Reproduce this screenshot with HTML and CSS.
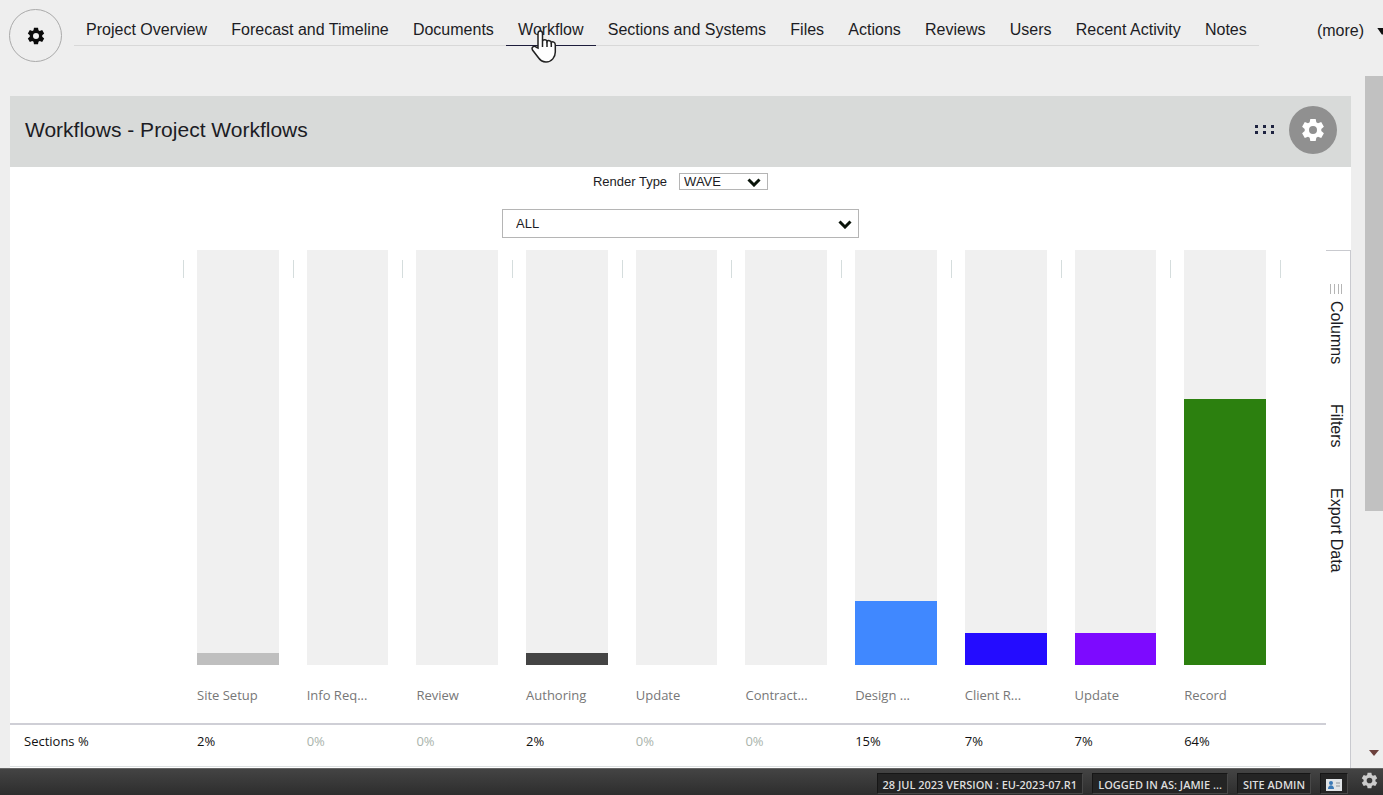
FILE: index.html
```html
<!DOCTYPE html>
<html lang="en">
<head>
  <meta charset="UTF-8">
  <meta name="viewport" content="width=device-width, initial-scale=1.0">
  <title>Workflows - Project Workflows</title>
  <link rel="stylesheet" href="styles.css">
</head>
<body>

  <svg class="sprite" aria-hidden="true">
    <symbol id="gear" viewBox="0 0 24 24">
      <path fill-rule="evenodd" d="M9.300 1h5.400l.6 3.300 1.700 1 3.200-1.200 2.700 4.700-2.600 2.200v2l2.600 2.200-2.700 4.700-3.200-1.200-1.700 1-.6 3.300H9.300l-.6-3.300-1.700-1-3.200 1.200-2.700-4.700 2.600-2.200v-2L1.100 8.800l2.700-4.700L7 5.300l1.700-1zM12 8a4 4 0 1 0 0 8 4 4 0 0 0 0-8z"/>
    </symbol>
    <symbol id="chevron" viewBox="0 0 14 9">
      <path d="M1.500 1.500 7 7l5.500-5.500" fill="none" stroke="#0a140a" stroke-width="3"/>
    </symbol>
  </svg>

  <header class="topbar">
    <button class="round-btn" aria-label="Settings"><svg><use href="#gear"/></svg></button>
    <nav class="tabs">
      <a href="#">Project Overview</a>
      <a href="#">Forecast and Timeline</a>
      <a href="#">Documents</a>
      <a href="#" class="active">Workflow
        <svg class="pointer" viewBox="0 0 27 35">
          <path d="M7 19V4.500C7 1 11.500 1 11.500 4.500V12c1-2 4.300-1.500 4.500.5 1-1.500 4-1 4.300 1 1.200-1.300 4-.5 4 2.500v7c0 5-3.500 10-9.300 10-4.500 0-6.500-2.500-8.500-5.500L1.500 21c-1.500-3 1.500-4.500 3.500-3z" fill="#fff" stroke="#222" stroke-width="1.500"/>
          <path d="M11.500 12v6M16 12.500V18M20.300 13.500V18" stroke="#222" stroke-width="1.500"/>
        </svg>
      </a>
      <a href="#">Sections and Systems</a>
      <a href="#">Files</a>
      <a href="#">Actions</a>
      <a href="#">Reviews</a>
      <a href="#">Users</a>
      <a href="#">Recent Activity</a>
      <a href="#">Notes</a>
    </nav>
    <button class="more">(more) <span class="caret"></span></button>
  </header>

  <main class="main">
    <section class="panel">
      <div class="panel-head">
        <h1>Workflows - Project Workflows</h1>
        <svg class="grip" viewBox="0 0 20 10">
          <path d="M0 0h3v3H0zM8 0h3v3H8zM16 0h3v3h-3zM0 6h3v3H0zM8 6h3v3H8zM16 6h3v3h-3z"/>
        </svg>
        <button class="round-btn solid" aria-label="Panel settings"><svg><use href="#gear"/></svg></button>
      </div>

      <div class="filters">
        <div class="render-type">
          <label for="render">Render Type</label>
          <span class="select small">
            <select id="render"><option>WAVE</option></select>
            <svg><use href="#chevron"/></svg>
          </span>
        </div>
        <span class="select wide">
          <select aria-label="Workflow"><option>ALL</option></select>
          <svg><use href="#chevron"/></svg>
        </span>
      </div>

      <div class="grid">
        <div class="grid-body">
          <table class="wave">
            <colgroup>
              <col class="col-name">
              <col span="10">
              <col class="col-end">
            </colgroup>
            <thead>
              <tr>
                <td></td>
                <th><div class="bar"><div class="fill silver" style="height: 2.8%"></div></div>Site Setup</th>
                <th><div class="bar"></div>Info Req...</th>
                <th><div class="bar"></div>Review</th>
                <th><div class="bar"><div class="fill dark" style="height: 2.8%"></div></div>Authoring</th>
                <th><div class="bar"></div>Update</th>
                <th><div class="bar"></div>Contract...</th>
                <th><div class="bar"><div class="fill blue" style="height: 15.4%"></div></div>Design ...</th>
                <th><div class="bar"><div class="fill indigo" style="height: 7.7%"></div></div>Client R...</th>
                <th><div class="bar"><div class="fill violet" style="height: 7.7%"></div></div>Update</th>
                <th><div class="bar"><div class="fill green" style="height: 64.1%"></div></div>Record</th>
                <td class="end"></td>
              </tr>
            </thead>
            <tbody>
              <tr>
                <th>Sections %</th>
                <td>2%</td>
                <td class="zero">0%</td>
                <td class="zero">0%</td>
                <td>2%</td>
                <td class="zero">0%</td>
                <td class="zero">0%</td>
                <td>15%</td>
                <td>7%</td>
                <td>7%</td>
                <td>64%</td>
                <td class="end"></td>
              </tr>
            </tbody>
          </table>
        </div>
        <div class="side-tabs">
          <button><svg class="cols" viewBox="0 0 12 10"><path d="M.5 0v10M4.500 0v10M8.500 0v10M11.500 0v10"/></svg>Columns</button>
          <button>Filters</button>
          <button>Export Data</button>
        </div>
      </div>
    </section>

    <div class="scroll">
      <div class="thumb"></div>
      <span class="down"></span>
    </div>
  </main>

  <footer class="status">
    <span class="cell">28 JUL 2023 VERSION : EU-2023-07.R1</span>
    <span class="cell">LOGGED IN AS: JAMIE ...</span>
    <span class="cell">SITE ADMIN</span>
    <button class="cell" aria-label="Contact card">
      <svg class="card" viewBox="0 0 16 12">
        <path d="M0 0h16v12H0z" fill="#dfe3e6"/>
        <circle cx="5" cy="4" r="2" fill="#3a78b5"/>
        <path d="M2 10c0-5 6-5 6 0z" fill="#3a78b5"/>
        <path d="M10 4h4M10 7h4" stroke="#8d949a"/>
      </svg>
    </button>
    <button class="status-gear" aria-label="Preferences"><svg><use href="#gear"/></svg></button>
  </footer>

</body>
</html>
```
FILE: styles.css
```css
* {
  box-sizing: border-box;
}

body {
  margin: 0;
  height: 100vh;
  display: flex;
  flex-direction: column;
  overflow: hidden;
  background: #eeeeee;
  font-family: "Liberation Sans", Arial, sans-serif;
  color: #1c1c24;
}

button {
  border: 0;
  padding: 0;
  background: none;
  color: inherit;
  font: inherit;
  cursor: pointer;
}

svg {
  display: block;
}

.sprite {
  position: absolute;
  width: 0;
  height: 0;
}

/* top navigation */
.topbar {
  display: flex;
  align-items: flex-start;
  height: 76px;
  padding: 9px 0 0 9px;
}

.round-btn {
  flex: none;
  display: flex;
  align-items: center;
  justify-content: center;
  width: 53px;
  height: 53px;
  border: 1px solid #aaa;
  border-radius: 50%;
}

.round-btn svg {
  width: 18px;
  height: 18px;
  fill: #0a0a0a;
}

.tabs {
  flex: 1;
  display: flex;
  margin: 0 58px 0 12px;
  border-bottom: 1px solid #d8d8d8;
}

.tabs a {
  flex: 1 1 auto;
  position: relative;
  height: 37px;
  margin-bottom: -1px;
  line-height: 42px;
  font-size: 16px;
  text-align: center;
  white-space: nowrap;
  text-decoration: none;
  color: inherit;
}

.tabs .active {
  border-bottom: 1px solid #1e1e3c;
}

.pointer {
  position: absolute;
  left: 25px;
  top: 20px;
  width: 27px;
  height: 35px;
}

.more {
  display: flex;
  align-items: center;
  gap: 13px;
  height: 44px;
  font-size: 16px;
  white-space: nowrap;
}

.caret {
  width: 6px;
  height: 7px;
  background: #111;
  clip-path: polygon(0 0, 100% 0, 100% 100%, 80% 100%);
}

/* content */
.main {
  flex: 1;
  min-height: 0;
  display: flex;
}

.panel {
  flex: 1;
  display: flex;
  flex-direction: column;
  margin: 20px 14px 0 10px;
  background: #fff;
}

.panel-head {
  display: flex;
  align-items: center;
  height: 71px;
  padding: 0 14px 3px 15px;
  background: #d8dad9;
}

.panel-head h1 {
  flex: 1;
  margin: 0;
  font-size: 21px;
  font-weight: normal;
}

.grip {
  width: 20px;
  height: 10px;
  margin-right: 14px;
  fill: #1e2340;
}

.round-btn.solid {
  width: 48px;
  height: 48px;
  border: 0;
  background: #909090;
}

.solid svg {
  width: 24px;
  height: 24px;
  fill: #fff;
}

.filters {
  display: flex;
  flex-direction: column;
  align-items: center;
  gap: 19px;
  padding: 6px 0 12px;
  font-size: 13px;
}

.render-type {
  display: flex;
  align-items: center;
  gap: 12px;
  height: 17px;
}

.select {
  position: relative;
}

.select select {
  display: block;
  width: 100%;
  height: 100%;
  padding: 0 4px;
  border: 1px solid #b5b5b5;
  border-radius: 0;
  background: #fff;
  color: inherit;
  font: inherit;
  appearance: none;
}

.select svg {
  position: absolute;
  top: 50%;
  right: 7px;
  width: 14px;
  height: 9px;
  margin-top: -4px;
  pointer-events: none;
}

.small {
  width: 89px;
  height: 17px;
}

.wide {
  width: 357px;
  height: 29px;
}

.wide select {
  padding: 0 13px;
}

.grid {
  flex: 1;
  display: flex;
}

.grid-body {
  flex: 1;
}

/* wave chart */
.wave {
  width: 100%;
  table-layout: fixed;
  border-collapse: collapse;
  font-family: "Open Sans", "Noto Sans", sans-serif;
  font-size: 13px;
  line-height: 18px;
  color: #111;
}

.col-name {
  width: 173px;
}

.col-end {
  width: 46px;
}

.wave th,
.wave td {
  padding: 0 14px;
  text-align: left;
  font-weight: normal;
}

.wave thead tr {
  border-bottom: 2px solid #cfcfd6;
}

.wave thead th {
  padding-bottom: 19px;
  color: #777;
}

/* short divider at the top of every column */
.wave thead th,
.wave thead .end {
  background: linear-gradient(#d5dddd, #d5dddd) 0 10px / 1px 18px no-repeat;
}

.wave tbody th,
.wave tbody td {
  height: 42px;
  padding-bottom: 9px;
  border-bottom: 1px solid #dde1e2;
}

.wave tbody .end {
  border-bottom: 0;
}

.wave .zero {
  color: #aab4ac;
}

.bar {
  display: flex;
  align-items: flex-end;
  height: 415px;
  margin-bottom: 21px;
  background: #f0f0f0;
}

.fill {
  width: 100%;
}

.silver {
  background: #bfbfbf;
}

.dark {
  background: #444;
}

.blue {
  background: #4088ff;
}

.indigo {
  background: #240cff;
}

.violet {
  background: #7d0aff;
}

.green {
  background: #2c800f;
}

.side-tabs {
  display: flex;
  flex-direction: column;
  align-items: center;
  gap: 40px;
  width: 25px;
  padding: 33px 4px 0 0;
  border-top: 1px solid #c9cacf;
  border-right: 1px solid #c9cacf;
}

.side-tabs button {
  display: flex;
  align-items: center;
  gap: 7px;
  line-height: 20px;
  font-size: 16px;
  writing-mode: vertical-rl;
}

.cols {
  width: 12px;
  height: 10px;
  stroke: #b5b5b5;
}

/* page scrollbar */
.scroll {
  display: flex;
  flex-direction: column;
  justify-content: space-between;
  align-items: center;
  width: 18px;
  padding-bottom: 12px;
}

.thumb {
  width: 100%;
  height: 64%;
  background: #c1c1c1;
}

.down {
  border: 5px solid transparent;
  border-top: 6px solid #6b403c;
  border-bottom: 0;
}

/* status bar */
.status {
  display: flex;
  align-items: center;
  justify-content: flex-end;
  gap: 9px;
  height: 27px;
  padding: 3px 5px 0 0;
  border-top: 1px solid #666;
  background: linear-gradient(#444, #2d2d2d);
  font-family: "Open Sans", sans-serif;
  font-size: 11px;
  font-weight: 600;
  color: #ddd;
}

.cell {
  display: flex;
  align-items: center;
  height: 21px;
  padding: 2px 5px 0;
  border: 1px solid #161616;
  border-right-color: #484848;
  border-bottom-color: #484848;
  background: #242424;
  white-space: nowrap;
}

.card {
  width: 16px;
  height: 12px;
}

.status-gear {
  margin: 0 0 6px 4px;
}

.status-gear svg {
  width: 17px;
  height: 17px;
  fill: #ccc;
}
```
